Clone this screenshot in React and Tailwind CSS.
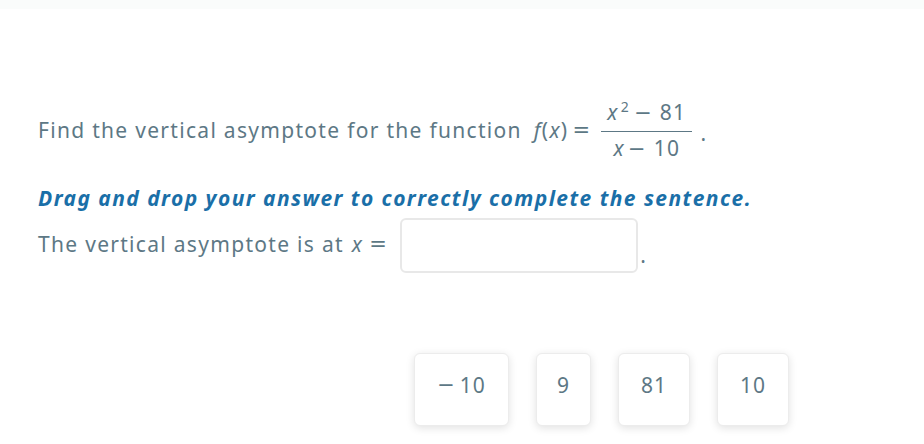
import React from "react";

const font = { fontFamily: "'Noto Sans', sans-serif" };
const mathSym = { fontFamily: "'DejaVu Sans', sans-serif" };

function Tile({ children, w }) {
  return (
    <div
      className={`flex h-[73px] items-center justify-center rounded-[6px] border border-[#ececec] bg-white pb-[6px] text-[21px] tracking-[1px] text-[#5d7885] shadow-[0_2px_8px_rgba(0,0,0,0.12)] ${w}`}
    >
      {children}
    </div>
  );
}

export default function App() {
  return (
    <div className="min-h-[444px] w-[924px] bg-white text-[#5d7885]" style={font}>
      <div className="h-[9px] bg-[#fafcfb]" />
      <div className="pl-[38px] pt-[89px]">
        <div className="flex h-[66px] items-center text-[21px] tracking-[1.3px]">
          <span>Find the vertical asymptote for the function</span>
          <span className="ml-[12px] italic">f</span>
          <span>(</span>
          <span className="italic">x</span>
          <span>)</span>
          <span className="ml-[4px]" style={mathSym}>=</span>
          <span className="ml-[10px] inline-flex flex-col items-center">
            <span className="px-[6px] pb-[2px] leading-[31px]">
              <span className="italic">x</span>
              <sup className="relative -top-[8px] ml-[2px] text-[14px]">2</sup>
              <span className="ml-[4px]" style={mathSym}>−</span>
              <span> 81</span>
            </span>
            <span className="h-[1px] w-full bg-[#5d7885]" />
            <span className="px-[6px] leading-[33px]">
              <span className="italic">x</span>
              <span className="ml-[3px]" style={mathSym}>−</span>
              <span> 10</span>
            </span>
          </span>
          <span className="ml-[8px] mt-[6px]">.</span>
        </div>
        <div className="mt-[19px] text-[21px] font-bold italic tracking-[1.45px] text-[#1a6fa8]">
          Drag and drop your answer to correctly complete the sentence.
        </div>
        <div className="mt-[3px] flex items-center text-[21px] tracking-[1.3px]">
          <span>The vertical asymptote is at</span>
          <span className="ml-[8px] italic">x</span>
          <span className="ml-[6px]" style={mathSym}>=</span>
          <div className="ml-[12px] h-[55px] w-[238px] rounded-[6px] border-2 border-[#e8e8e8]" />
          <span className="mt-[20px] ml-[2px] leading-none">.</span>
        </div>
      </div>
      <div className="mt-[80px] flex gap-[27px] pl-[414px]">
        <Tile w="w-[95px]">
          <span style={mathSym}>−</span>
          <span className="ml-[4px]">10</span>
        </Tile>
        <Tile w="w-[55px]">9</Tile>
        <Tile w="w-[72px]">81</Tile>
        <Tile w="w-[72px]">10</Tile>
      </div>
    </div>
  );
}
